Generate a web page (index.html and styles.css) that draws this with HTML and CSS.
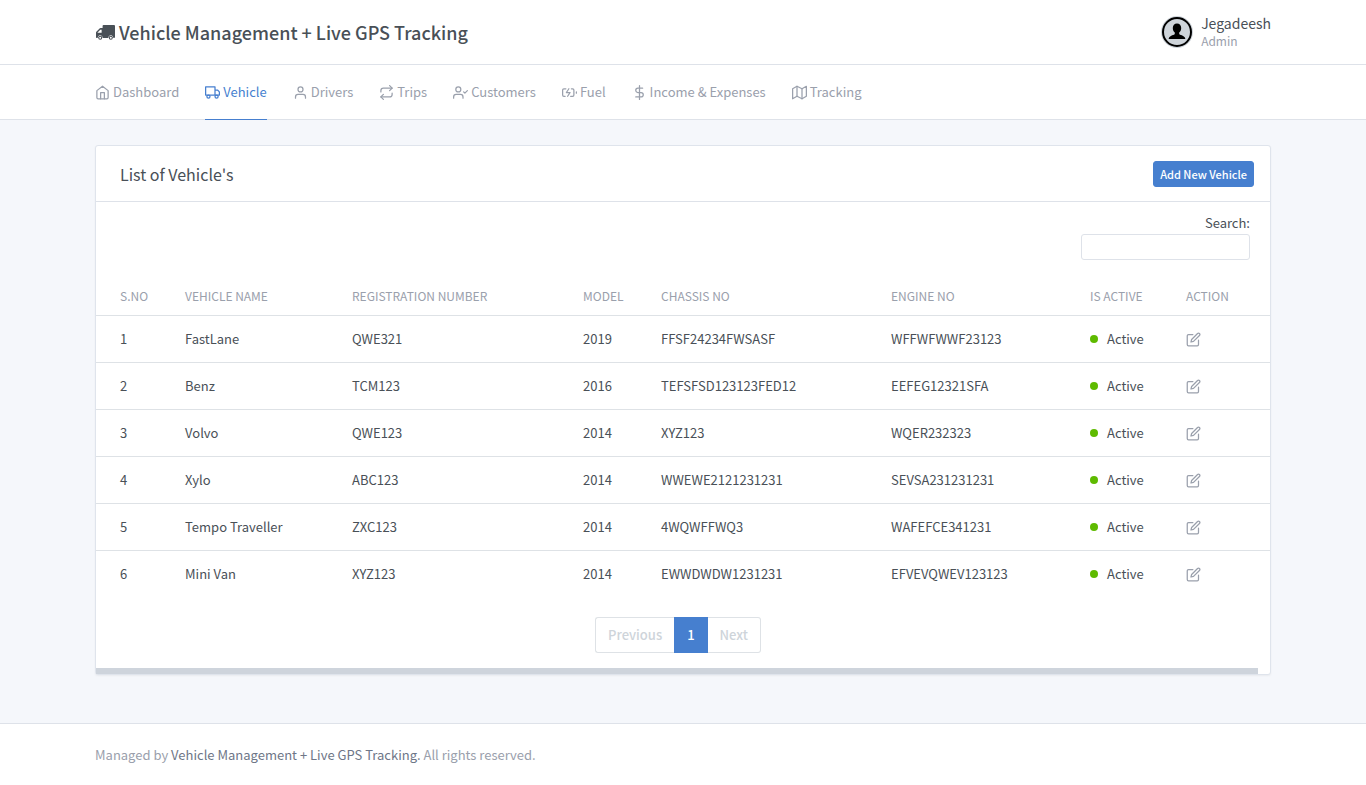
FILE: index.html
```html
<!DOCTYPE html>
<html lang="en">

<head>
    <meta charset="UTF-8">
    <meta name="viewport" content="width=device-width, initial-scale=1.0">
    <title>Vehicle Management + Live GPS Tracking</title>
    <link rel="stylesheet" href="styles.css">
</head>

<body>
    <!-- Icon shapes used in the menu and the table -->
    <svg class="sprite" aria-hidden="true">
        <symbol id="home" viewBox="0 0 24 24"><path d="M3 9l9-7 9 7v11a2 2 0 0 1-2 2H5a2 2 0 0 1-2-2z"/><path d="M9 22V12h6v10"/></symbol>
        <symbol id="truck" viewBox="0 0 24 24"><path d="M1 3h15v13H1zM16 8h4l3 3v5h-7z"/><circle cx="5.5" cy="18.5" r="2.5"/><circle cx="18.5" cy="18.5" r="2.5"/></symbol>
        <symbol id="user" viewBox="0 0 24 24"><path d="M20 21v-2a4 4 0 0 0-4-4H8a4 4 0 0 0-4 4v2"/><circle cx="12" cy="7" r="4"/></symbol>
        <symbol id="repeat" viewBox="0 0 24 24"><path d="M17 1l4 4-4 4"/><path d="M3 11V9a4 4 0 0 1 4-4h14"/><path d="M7 23l-4-4 4-4"/><path d="M21 13v2a4 4 0 0 1-4 4H3"/></symbol>
        <symbol id="user-check" viewBox="0 0 24 24"><path d="M16 21v-2a4 4 0 0 0-4-4H5a4 4 0 0 0-4 4v2"/><circle cx="8.5" cy="7" r="4"/><path d="M17 11l2 2 4-4"/></symbol>
        <symbol id="battery" viewBox="0 0 24 24"><path d="M5 18H3a2 2 0 0 1-2-2V8a2 2 0 0 1 2-2h3.19M15 6h2a2 2 0 0 1 2 2v8a2 2 0 0 1-2 2h-3.19"/><path d="M23 13v-2"/><path d="M11 6l-4 6h6l-4 6"/></symbol>
        <symbol id="dollar" viewBox="0 0 24 24"><path d="M12 1v22"/><path d="M17 5H9.500a3.500 3.500 0 0 0 0 7h5a3.500 3.500 0 0 1 0 7H6"/></symbol>
        <symbol id="map" viewBox="0 0 24 24"><path d="M1 6v16l7-4 8 4 7-4V2l-7 4-8-4z"/><path d="M8 2v16M16 6v16"/></symbol>
        <symbol id="edit" viewBox="0 0 24 24"><path d="M11 4H4a2 2 0 0 0-2 2v14a2 2 0 0 0 2 2h14a2 2 0 0 0 2-2v-7"/><path d="M18.500 2.500a2.121 2.121 0 0 1 3 3L12 15l-4 1 1-4z"/></symbol>
    </svg>

    <header class="header">
        <div class="container header-row">
            <a class="brand" href="#">
                <svg class="brand-icon" viewBox="0 0 20 16" aria-hidden="true">
                    <path d="M8.500 1H19a1 1 0 0 1 1 1v11a1 1 0 0 1-1 1H1.700a.8.8 0 0 1-.7-.8V8.800c0-.6.2-1 .6-1.400L4.300 4.700c.4-.4.8-.6 1.300-.6h2V2c0-.6.3-1 .9-1z"/>
                    <path class="hole" d="M2.600 8.800V8.500L5.300 5.700h1.300v3.100z"/>
                    <circle class="wheel" cx="5.200" cy="13.700" r="2"/>
                    <circle class="wheel" cx="15.800" cy="13.700" r="2"/>
                    <circle class="hole" cx="5.200" cy="13.700" r="1"/>
                    <circle class="hole" cx="15.800" cy="13.700" r="1"/>
                </svg>
                Vehicle Management + Live GPS Tracking
            </a>
            <a class="account" href="#">
                <svg class="avatar" viewBox="0 0 32 32" aria-hidden="true">
                    <circle class="avatar-bg" cx="16" cy="16" r="16"/>
                    <circle class="avatar-ring" cx="16" cy="16" r="14"/>
                    <path d="M16 7.500c2.600 0 4.200 1.800 4.200 4.500 0 1.900-.8 3.600-2 4.600v1.200c0 .5.3.7.8.9 2.500.8 5 1.500 5.400 4.300H7.600c.4-2.800 2.900-3.500 5.400-4.300.5-.2.8-.4.8-.9v-1.200c-1.200-1-2-2.700-2-4.600 0-2.700 1.600-4.500 4.200-4.500z"/>
                </svg>
                <span class="account-text">
                    <span class="account-name">Jegadeesh</span>
                    <span class="account-role">Admin</span>
                </span>
            </a>
        </div>
    </header>

    <nav class="menu">
        <div class="container menu-row">
            <a class="menu-link" href="#"><svg class="icon"><use href="#home"/></svg>Dashboard</a>
            <a class="menu-link active" href="#"><svg class="icon"><use href="#truck"/></svg>Vehicle</a>
            <a class="menu-link" href="#"><svg class="icon"><use href="#user"/></svg>Drivers</a>
            <a class="menu-link" href="#"><svg class="icon"><use href="#repeat"/></svg>Trips</a>
            <a class="menu-link" href="#"><svg class="icon"><use href="#user-check"/></svg>Customers</a>
            <a class="menu-link" href="#"><svg class="icon"><use href="#battery"/></svg>Fuel</a>
            <a class="menu-link" href="#"><svg class="icon"><use href="#dollar"/></svg>Income &amp; Expenses</a>
            <a class="menu-link" href="#"><svg class="icon"><use href="#map"/></svg>Tracking</a>
        </div>
    </nav>

    <main class="container">
        <section class="card">
            <div class="card-header">
                <h1 class="card-title">List of Vehicle's</h1>
                <button class="btn" type="button">Add New Vehicle</button>
            </div>

            <div class="search">
                <label for="search">Search:</label>
                <input type="search" id="search">
            </div>

            <table class="table">
                <colgroup>
                    <col class="col-sno">
                    <col class="col-name">
                    <col class="col-reg">
                    <col class="col-model">
                    <col class="col-chassis">
                    <col class="col-engine">
                    <col class="col-active">
                    <col class="col-action">
                </colgroup>
                <thead>
                    <tr>
                        <th>S.No</th>
                        <th>Vehicle Name</th>
                        <th>Registration Number</th>
                        <th>Model</th>
                        <th>Chassis No</th>
                        <th>Engine No</th>
                        <th>Is Active</th>
                        <th>Action</th>
                    </tr>
                </thead>
                <tbody>
                    <tr>
                        <td>1</td>
                        <td>FastLane</td>
                        <td>QWE321</td>
                        <td>2019</td>
                        <td>FFSF24234FWSASF</td>
                        <td>WFFWFWWF23123</td>
                        <td><span class="status"></span>Active</td>
                        <td><a class="edit" href="#" aria-label="Edit"><svg class="icon"><use href="#edit"/></svg></a></td>
                    </tr>
                    <tr>
                        <td>2</td>
                        <td>Benz</td>
                        <td>TCM123</td>
                        <td>2016</td>
                        <td>TEFSFSD123123FED12</td>
                        <td>EEFEG12321SFA</td>
                        <td><span class="status"></span>Active</td>
                        <td><a class="edit" href="#" aria-label="Edit"><svg class="icon"><use href="#edit"/></svg></a></td>
                    </tr>
                    <tr>
                        <td>3</td>
                        <td>Volvo</td>
                        <td>QWE123</td>
                        <td>2014</td>
                        <td>XYZ123</td>
                        <td>WQER232323</td>
                        <td><span class="status"></span>Active</td>
                        <td><a class="edit" href="#" aria-label="Edit"><svg class="icon"><use href="#edit"/></svg></a></td>
                    </tr>
                    <tr>
                        <td>4</td>
                        <td>Xylo</td>
                        <td>ABC123</td>
                        <td>2014</td>
                        <td>WWEWE2121231231</td>
                        <td>SEVSA231231231</td>
                        <td><span class="status"></span>Active</td>
                        <td><a class="edit" href="#" aria-label="Edit"><svg class="icon"><use href="#edit"/></svg></a></td>
                    </tr>
                    <tr>
                        <td>5</td>
                        <td>Tempo Traveller</td>
                        <td>ZXC123</td>
                        <td>2014</td>
                        <td>4WQWFFWQ3</td>
                        <td>WAFEFCE341231</td>
                        <td><span class="status"></span>Active</td>
                        <td><a class="edit" href="#" aria-label="Edit"><svg class="icon"><use href="#edit"/></svg></a></td>
                    </tr>
                    <tr>
                        <td>6</td>
                        <td>Mini Van</td>
                        <td>XYZ123</td>
                        <td>2014</td>
                        <td>EWWDWDW1231231</td>
                        <td>EFVEVQWEV123123</td>
                        <td><span class="status"></span>Active</td>
                        <td><a class="edit" href="#" aria-label="Edit"><svg class="icon"><use href="#edit"/></svg></a></td>
                    </tr>
                </tbody>
            </table>

            <div class="pagination">
                <button class="page" type="button" disabled>Previous</button>
                <button class="page current" type="button">1</button>
                <button class="page" type="button" disabled>Next</button>
            </div>
            <div class="scroll-thumb"></div>
        </section>
    </main>

    <footer class="footer">
        <div class="container">
            Managed by <a href="#">Vehicle Management + Live GPS Tracking.</a> All rights reserved.
        </div>
    </footer>
</body>

</html>
```
FILE: styles.css
```css
* {
    margin: 0;
    padding: 0;
    box-sizing: border-box;
}

body {
    font-family: "Source Sans Pro", "Noto Sans CJK SC", "Noto Sans", sans-serif;
    font-size: 13px;
    line-height: 22px;
    background-color: #f5f7fb;
    color: #495057;
    min-height: 100vh;
    display: flex;
    flex-direction: column;
}

a {
    color: inherit;
    text-decoration: none;
}

button,
input {
    font: inherit;
}

.sprite {
    display: none;
}

.icon {
    width: 15px;
    height: 15px;
    fill: none;
    stroke: currentColor;
    stroke-width: 2;
    stroke-linecap: round;
    stroke-linejoin: round;
}

.container {
    width: 100%;
    max-width: 1200px;
    margin: 0 auto;
    padding: 0 12px;
}

/* Header */
.header {
    background-color: #fff;
    border-bottom: 1px solid #dee2e9;
}

.header-row {
    display: flex;
    justify-content: space-between;
    align-items: center;
    height: 64px;
}

.brand {
    display: flex;
    align-items: center;
    gap: 4px;
    font-size: 18px;
    font-weight: 500;
}

.brand-icon {
    width: 20px;
    height: 16px;
    fill: #495057;
}

.brand-icon .wheel {
    stroke: #fff;
    stroke-width: 1;
    paint-order: stroke;
}

.brand-icon .hole {
    fill: #fff;
}

.account {
    display: flex;
    align-items: center;
    gap: 8px;
}

.avatar {
    width: 32px;
    height: 32px;
}

.avatar-bg {
    fill: #ced4da;
}

.avatar-ring {
    fill: none;
    stroke: #000;
    stroke-width: 2;
}

.account-name,
.account-role {
    display: block;
    line-height: 17px;
}

.account-name {
    font-size: 14px;
}

.account-role {
    font-size: 12px;
    color: #9aa0ac;
}

/* Menu */
.menu {
    background-color: #fff;
    border-bottom: 1px solid #dee2e9;
}

.menu-row {
    display: flex;
    gap: 26px;
}

.menu-link {
    display: flex;
    align-items: center;
    gap: 3px;
    padding: 16px 0;
    margin-bottom: -1px;
    border-bottom: 1px solid transparent;
    color: #9aa0ac;
}

.menu-link.active {
    color: #467fcf;
    border-color: #467fcf;
}

/* Card */
.card {
    margin: 25px 0 48px;
    background-color: #fff;
    border: 1px solid #dfe4ec;
    border-radius: 3px;
    box-shadow: 0 1px 2px rgba(0, 0, 0, 0.05);
}

.card-header {
    display: flex;
    justify-content: space-between;
    align-items: center;
    padding: 15px 16px 14px 24px;
    border-bottom: 1px solid #dee2e9;
}

.card-title {
    font-size: 16px;
    font-weight: 400;
}

.btn {
    padding: 0 6px;
    font-size: 11px;
    font-weight: 500;
    line-height: 24px;
    color: #fff;
    background-color: #467fcf;
    border: 1px solid #467fcf;
    border-radius: 3px;
    cursor: pointer;
}

.search {
    display: flex;
    flex-direction: column;
    align-items: flex-end;
    padding: 10px 20px 17px;
}

.search input {
    width: 169px;
    height: 26px;
    padding: 0 6px;
    border: 1px solid #dee2e9;
    border-radius: 3px;
}

/* Table */
.table {
    width: 100%;
    table-layout: fixed;
    border-collapse: separate;
    border-spacing: 0;
}

.table th,
.table td {
    padding: 12px;
    text-align: left;
    white-space: nowrap;
}

.table th:first-child,
.table td:first-child {
    padding-left: 24px;
}

.table th {
    padding-top: 8px;
    padding-bottom: 8px;
    font-size: 12px;
    font-weight: 400;
    text-transform: uppercase;
    color: #9aa0ac;
}

.table td {
    border-top: 1px solid #dee2e6;
}

.col-sno { width: 77px; }
.col-name { width: 167px; }
.col-reg { width: 231px; }
.col-model { width: 78px; }
.col-chassis { width: 230px; }
.col-engine { width: 199px; }
.col-active { width: 96px; }

.status {
    display: inline-block;
    width: 8px;
    height: 8px;
    margin-right: 9px;
    border-radius: 50%;
    background-color: #5eba00;
    vertical-align: 1px;
}

.edit {
    display: flex;
    color: #9aa0ac;
}

/* Pagination */
.pagination {
    display: flex;
    justify-content: center;
    padding: 20px 10px 15px 0;
}

.page {
    padding: 0 12px;
    line-height: 34px;
    font-weight: 500;
    color: #ced4da;
    background-color: #fff;
    border: 1px solid #dee2e6;
}

.page:first-child {
    border-right: 0;
    border-radius: 3px 0 0 3px;
}

.page:last-child {
    border-left: 0;
    border-radius: 0 3px 3px 0;
}

.page.current {
    color: #fff;
    background-color: #467fcf;
    border-color: #467fcf;
}

.scroll-thumb {
    width: 99%;
    height: 6px;
    background-color: #ced4dc;
}

/* Footer */
.footer {
    flex: 1;
    padding: 20px 0;
    color: #9aa0ac;
    background-color: #fff;
    border-top: 1px solid #dee2e9;
}

.footer a {
    color: #6e7687;
}
```
